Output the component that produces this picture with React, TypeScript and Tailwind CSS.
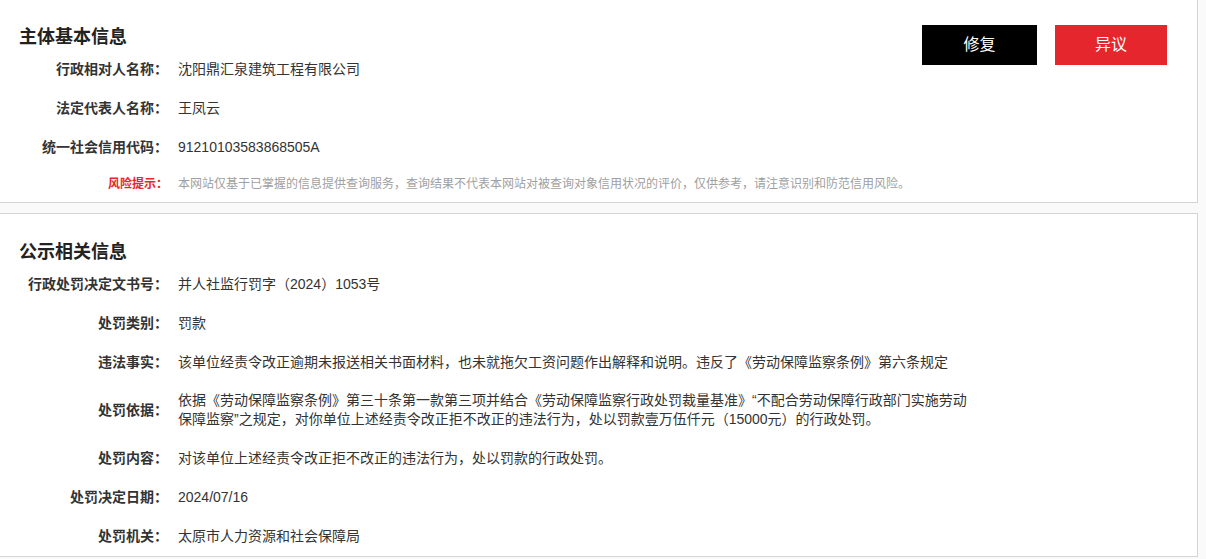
const font = { fontFamily: '"Liberation Sans", "Noto Sans CJK SC", sans-serif' };

function Row({ label, children, red }: { label: string; children: React.ReactNode; red?: boolean }) {
  return (
    <div className="flex items-center">
      <div className={`w-[168px] shrink-0 text-right text-[14px] font-bold leading-[20px] ${red ? "text-[#e5262d]" : "text-[#333]"}`}>
        {label}：
      </div>
      <div className="ml-[10px] text-[14px] leading-[20px] text-[#333]">{children}</div>
    </div>
  );
}

export default function App() {
  return (
    <div className="w-[1206px] h-[559px] overflow-hidden bg-[#fafafa]" style={font}>
      {/* 主体基本信息 */}
      <div className="w-[1198px] bg-white border-r border-b border-[#d4d4d4] flex justify-between">
        <div className="pt-[25px] pb-[9px]">
          <h2 className="pl-[19px] text-[18px] leading-[24px] font-bold text-[#222]">主体基本信息</h2>
          <div className="mt-[10px] flex flex-col gap-[19px]">
            <Row label="行政相对人名称">沈阳鼎汇泉建筑工程有限公司</Row>
            <Row label="法定代表人名称">王凤云</Row>
            <Row label="统一社会信用代码">91210103583868505A</Row>
            <div className="flex items-center -mt-[1px]">
              <div className="w-[168px] shrink-0 text-right text-[12px] font-bold leading-[18px] text-[#e5262d]">风险提示：</div>
              <div className="ml-[10px] text-[12px] leading-[18px] text-[#a0a0a0]">
                本网站仅基于已掌握的信息提供查询服务，查询结果不代表本网站对被查询对象信用状况的评价，仅供参考，请注意识别和防范信用风险。
              </div>
            </div>
          </div>
        </div>
        <div className="flex gap-[18px] pt-[25px] pr-[30px]">
          <button className="w-[115px] h-[40px] bg-black text-white text-[16px]">修复</button>
          <button className="w-[112px] h-[40px] bg-[#e5262d] text-white text-[16px]">异议</button>
        </div>
      </div>

      {/* 公示相关信息 */}
      <div className="mt-[10px] w-[1198px] bg-white border-t border-r border-b border-[#d4d4d4] pt-[26px] pb-[10px]">
        <h2 className="pl-[19px] text-[18px] leading-[24px] font-bold text-[#222]">公示相关信息</h2>
        <div className="mt-[10px] flex flex-col gap-[19px]">
          <Row label="行政处罚决定文书号">并人社监行罚字（2024）1053号</Row>
          <Row label="处罚类别">罚款</Row>
          <Row label="违法事实">
            该单位经责令改正逾期未报送相关书面材料，也未就拖欠工资问题作出解释和说明。违反了《劳动保障监察条例》第六条规定
          </Row>
          <div className="flex items-center">
            <div className="w-[168px] shrink-0 text-right text-[14px] font-bold leading-[19px] text-[#333]">处罚依据：</div>
            <div className="ml-[10px] text-[14px] leading-[19px] text-[#333]">
              依据《劳动保障监察条例》第三十条第一款第三项并结合《劳动保障监察行政处罚裁量基准》“不配合劳动保障行政部门实施劳动
              <br />
              保障监察”之规定，对你单位上述经责令改正拒不改正的违法行为，处以罚款壹万伍仟元（15000元）的行政处罚。
            </div>
          </div>
          <Row label="处罚内容">对该单位上述经责令改正拒不改正的违法行为，处以罚款的行政处罚。</Row>
          <Row label="处罚决定日期">2024/07/16</Row>
          <Row label="处罚机关">太原市人力资源和社会保障局</Row>
        </div>
      </div>
    </div>
  );
}
